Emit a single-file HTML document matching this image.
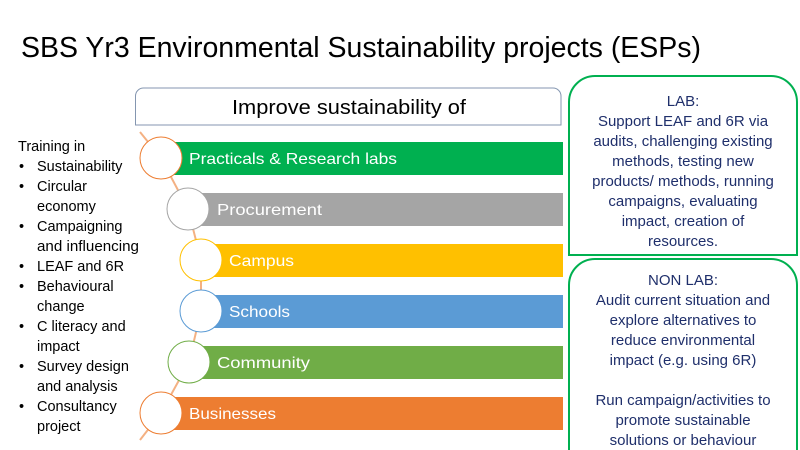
<!DOCTYPE html>
<html><head><meta charset="utf-8"><style>
html,body{margin:0;padding:0;background:#fff;width:800px;height:450px;overflow:hidden}
svg{display:block}
text{font-family:"Liberation Sans",sans-serif}
</style></head><body>
<svg width="800" height="450" viewBox="0 0 800 450">
<text x="21" y="57" font-size="29" fill="#000" textLength="680" lengthAdjust="spacingAndGlyphs">SBS Yr3 Environmental Sustainability projects (ESPs)</text>

<path d="M135.5,125 V96 a8,8 0 0 1 8,-8 H553 a8,8 0 0 1 8,8 V125 Z" fill="#fff" stroke="#8496b0" stroke-width="1"/>
<text x="232" y="114" font-size="20" fill="#000" textLength="234" lengthAdjust="spacingAndGlyphs">Improve sustainability of</text>

<polyline points="140,132 161,158 188,209 201,260 201,311 189,362 161,413 140,440" fill="none" stroke="#f4b183" stroke-width="2"/>

<rect x="161" y="142" width="402" height="33" fill="#00b050"/>
<rect x="188" y="193" width="375" height="33" fill="#a5a5a5"/>
<rect x="201" y="244" width="362" height="33" fill="#ffc000"/>
<rect x="201" y="295" width="362" height="33" fill="#5b9bd5"/>
<rect x="189" y="346" width="374" height="33" fill="#70ad47"/>
<rect x="161" y="397" width="402" height="33" fill="#ed7d31"/>

<circle cx="161" cy="158" r="21" fill="#fff" stroke="#ed7d31"/>
<circle cx="188" cy="209" r="21" fill="#fff" stroke="#a5a5a5"/>
<circle cx="201" cy="260" r="21" fill="#fff" stroke="#ffc000"/>
<circle cx="201" cy="311" r="21" fill="#fff" stroke="#5b9bd5"/>
<circle cx="189" cy="362" r="21" fill="#fff" stroke="#70ad47"/>
<circle cx="161" cy="413" r="21" fill="#fff" stroke="#ed7d31"/>

<g font-size="16" fill="#fff">
<text x="189" y="164" textLength="208" lengthAdjust="spacingAndGlyphs">Practicals &amp; Research labs</text>
<text x="217" y="215" textLength="105" lengthAdjust="spacingAndGlyphs">Procurement</text>
<text x="229" y="266" textLength="65" lengthAdjust="spacingAndGlyphs">Campus</text>
<text x="229" y="317" textLength="61" lengthAdjust="spacingAndGlyphs">Schools</text>
<text x="217" y="368" textLength="93" lengthAdjust="spacingAndGlyphs">Community</text>
<text x="189" y="419" textLength="87" lengthAdjust="spacingAndGlyphs">Businesses</text>
</g>

<g font-size="14.5" fill="#000">
<text x="18" y="151">Training in</text>
<text x="19" y="171">•</text><text x="37" y="171">Sustainability</text>
<text x="19" y="191">•</text><text x="37" y="191">Circular</text>
<text x="37" y="211">economy</text>
<text x="19" y="231">•</text><text x="37" y="231">Campaigning</text>
<text x="37" y="251" textLength="102" lengthAdjust="spacingAndGlyphs">and influencing</text>
<text x="19" y="271">•</text><text x="37" y="271">LEAF and 6R</text>
<text x="19" y="291">•</text><text x="37" y="291">Behavioural</text>
<text x="37" y="311">change</text>
<text x="19" y="331">•</text><text x="37" y="331">C literacy and</text>
<text x="37" y="351">impact</text>
<text x="19" y="371">•</text><text x="37" y="371">Survey design</text>
<text x="37" y="391">and analysis</text>
<text x="19" y="411">•</text><text x="37" y="411">Consultancy</text>
<text x="37" y="431">project</text>
</g>

<path d="M569,255 V102 a26,26 0 0 1 26,-26 H771 a26,26 0 0 1 26,26 V255 Z" fill="#fff" stroke="#00b050" stroke-width="2"/>
<path d="M569,452 V285 a26,26 0 0 1 26,-26 H771 a26,26 0 0 1 26,26 V452" fill="#fff" stroke="#00b050" stroke-width="2"/>

<g font-size="15" fill="#1f2f6b" text-anchor="middle">
<text x="683" y="106">LAB:</text>
<text x="683" y="126">Support LEAF and 6R via</text>
<text x="683" y="146">audits, challenging existing</text>
<text x="683" y="166">methods, testing new</text>
<text x="683" y="186">products/ methods, running</text>
<text x="683" y="206">campaigns, evaluating</text>
<text x="683" y="226">impact, creation of</text>
<text x="683" y="246">resources.</text>
<text x="683" y="285">NON LAB:</text>
<text x="683" y="305">Audit current situation and</text>
<text x="683" y="325">explore alternatives to</text>
<text x="683" y="345">reduce environmental</text>
<text x="683" y="365">impact (e.g. using 6R)</text>
<text x="683" y="405">Run campaign/activities to</text>
<text x="683" y="425">promote sustainable</text>
<text x="683" y="445">solutions or behaviour</text>
</g>
</svg>
</body></html>
